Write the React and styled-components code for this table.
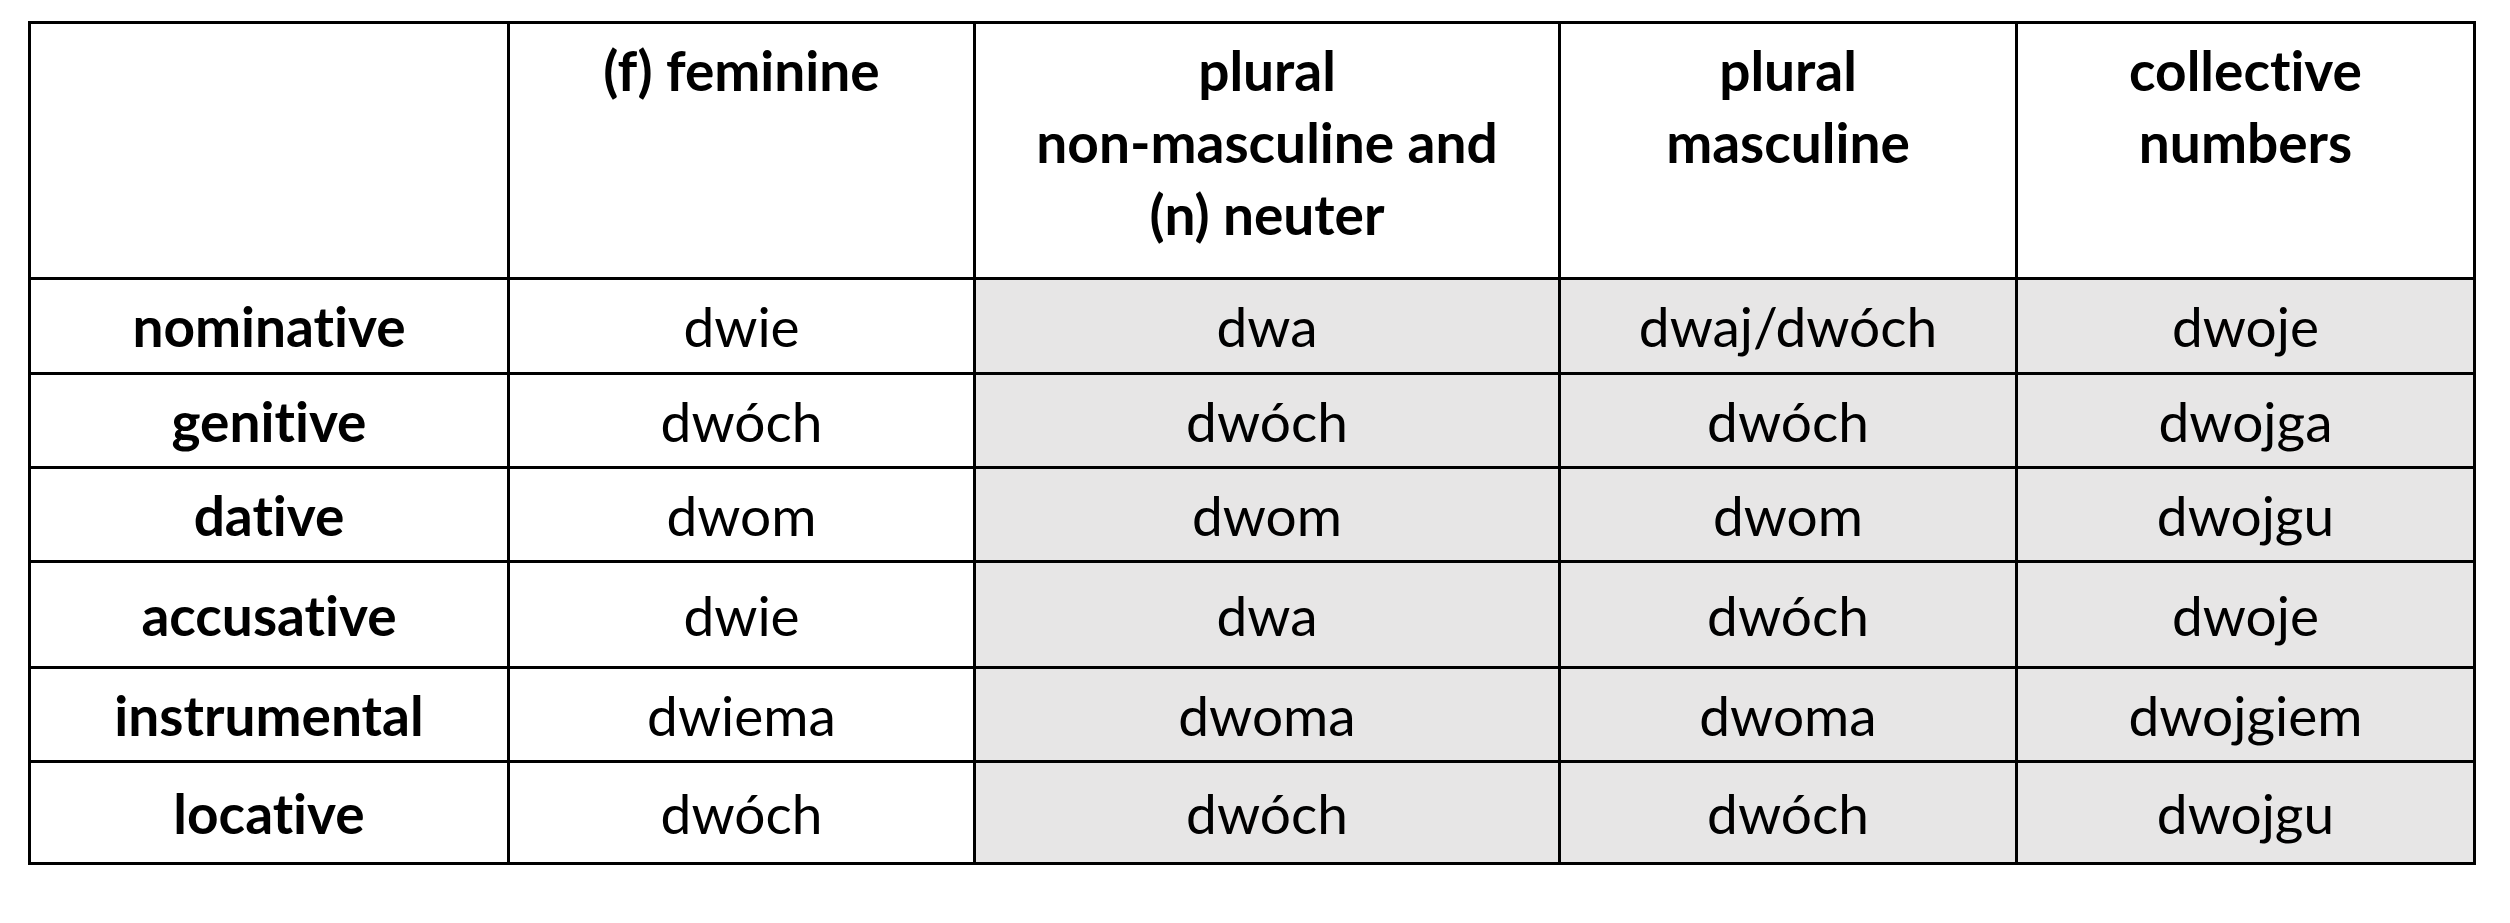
import React from "react";
import styled, { createGlobalStyle } from "styled-components";

const GlobalStyle = createGlobalStyle`
  html, body {
    margin: 0;
    padding: 0;
    background: #ffffff;
  }
  body {
    font-family: Lato, "Open Sans", "Liberation Sans", sans-serif;
    color: #000;
    font-variant-ligatures: none;
    font-feature-settings: "liga" 0, "clig" 0;
  }
`;

const Page = styled.div`
  padding: 21px 0 0 28px;
`;

const Grid = styled.div`
  display: grid;
  width: max-content;
  grid-template-columns: 479px 466px 585px 457px 458px;
  grid-template-rows: 256px 95px 94px 94px 106px 94px 102px;
  border-top: 3px solid #000;
  border-left: 3px solid #000;
`;

const Cell = styled.div`
  box-sizing: border-box;
  border-right: 3px solid #000;
  border-bottom: 3px solid #000;
  background: ${(p) => (p.$shaded ? "#e7e6e6" : "#ffffff")};
  display: flex;
  justify-content: center;
  align-items: ${(p) => (p.$head ? "flex-start" : "center")};
  padding-top: ${(p) => (p.$head ? "10px" : "0")};
  text-align: center;
  font-size: 55px;
  line-height: 72px;
  font-weight: ${(p) => (p.$bold ? 700 : 400)};
  white-space: nowrap;
  font-variant-ligatures: none;
  font-feature-settings: "liga" 0, "clig" 0;
`;

const headers = [
  [""],
  ["(f) feminine"],
  ["plural", "non-masculine and", "(n) neuter"],
  ["plural", "masculine"],
  ["collective", "numbers"],
];

const rows = [
  ["nominative", "dwie", "dwa", "dwaj/dwóch", "dwoje"],
  ["genitive", "dwóch", "dwóch", "dwóch", "dwojga"],
  ["dative", "dwom", "dwom", "dwom", "dwojgu"],
  ["accusative", "dwie", "dwa", "dwóch", "dwoje"],
  ["instrumental", "dwiema", "dwoma", "dwoma", "dwojgiem"],
  ["locative", "dwóch", "dwóch", "dwóch", "dwojgu"],
];

export default function App() {
  return (
    <>
      <GlobalStyle />
      <Page>
        <Grid>
          {headers.map((lines, i) => (
            <Cell key={`h${i}`} $head $bold>
              <div>
                {lines.map((l, j) => (
                  <React.Fragment key={j}>
                    {j > 0 && <br />}
                    {l}
                  </React.Fragment>
                ))}
              </div>
            </Cell>
          ))}
          {rows.map((r, ri) =>
            r.map((v, ci) => (
              <Cell key={`${ri}-${ci}`} $bold={ci === 0} $shaded={ci >= 2}>
                {v}
              </Cell>
            ))
          )}
        </Grid>
      </Page>
    </>
  );
}
